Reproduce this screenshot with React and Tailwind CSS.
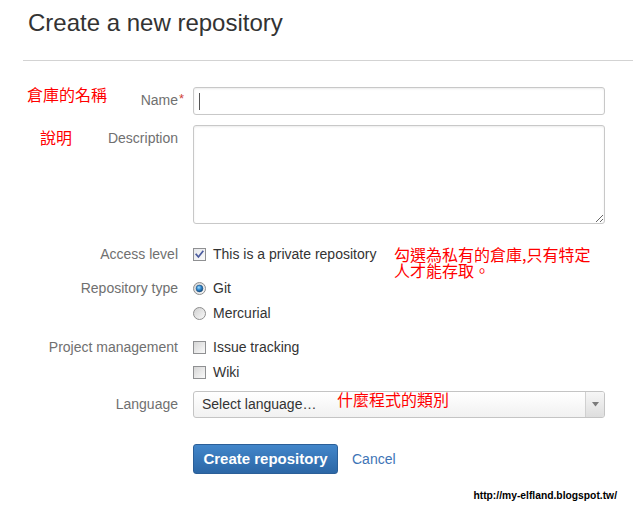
import React from "react";

function CheckBox({ checked }) {
  return (
    <svg width="13" height="13" viewBox="0 0 13 13" className="shrink-0">
      <defs>
        <linearGradient id={checked ? "cbg1" : "cbg0"} x1="0" y1="0" x2="1" y2="1">
          <stop offset="0" stopColor={checked ? "#e4e6ea" : "#d4d4d4"} />
          <stop offset="1" stopColor="#fbfbfb" />
        </linearGradient>
      </defs>
      <rect x="0.5" y="0.5" width="12" height="12" fill={`url(#${checked ? "cbg1" : "cbg0"})`} stroke="#8f9092" />
      {checked && (
        <path d="M3.2 6.4 L5.4 9 L9.8 3.4" stroke="#4b5b9e" strokeWidth="1.7" fill="none" strokeLinecap="square" />
      )}
    </svg>
  );
}

function Radio({ checked }) {
  return (
    <svg width="13" height="13" viewBox="0 0 13 13" className="shrink-0">
      <defs>
        <linearGradient id="rbg" x1="0" y1="0" x2="1" y2="1">
          <stop offset="0" stopColor="#cfcfcf" />
          <stop offset="1" stopColor="#fafafa" />
        </linearGradient>
        <radialGradient id="rdot" cx="0.4" cy="0.35" r="0.7">
          <stop offset="0" stopColor="#9fdcff" />
          <stop offset="0.5" stopColor="#2f86cc" />
          <stop offset="1" stopColor="#0e4475" />
        </radialGradient>
      </defs>
      <circle cx="6.5" cy="6.5" r="6" fill="url(#rbg)" stroke="#8e8e8e" />
      {checked && <circle cx="6.5" cy="6.5" r="3.4" fill="url(#rdot)" stroke="#1c4f80" strokeWidth="0.6" />}
    </svg>
  );
}

function Label({ children, className = "" }) {
  return (
    <div className={`w-[178px] shrink-0 text-right text-[14px] leading-[20px] text-[#707070] ${className}`}>
      {children}
    </div>
  );
}

function Option({ control, children }) {
  return (
    <div className="flex h-[20px] items-center gap-[7px] text-[14px] leading-[20px] text-[#333333]">
      {control}
      <span>{children}</span>
    </div>
  );
}

export default function App() {
  return (
    <div className="relative h-[517px] w-[633px] overflow-hidden bg-white font-['Liberation_Sans',Arial,sans-serif]">
      <h1 className="pl-[28px] pt-[9px] text-[24px] leading-[28px] text-[#333333]">Create a new repository</h1>
      <div className="ml-[23px] mt-[23px] h-px bg-[#d3d3d3]" />

      <div className="mt-[26px] flex flex-col">
        {/* Name */}
        <div className="flex">
          <Label className="mt-[3px]">
            <span className="relative">
              Name
              <span className="absolute left-full top-[-3px] pl-[1px] text-[13px] text-[#d04437]">*</span>
            </span>
          </Label>
          <div className="ml-[15px] flex h-[28px] w-[412px] items-center rounded-[3px] border border-[#c8c8c8] bg-white pl-[5px] shadow-[inset_0_1px_2px_rgba(0,0,0,0.08)]">
            <div className="h-[17px] w-px bg-[#555]" />
          </div>
        </div>

        {/* Description */}
        <div className="mt-[10px] flex">
          <Label className="mt-[3px]">Description</Label>
          <textarea
            readOnly
            className="ml-[15px] h-[99px] w-[412px] resize rounded-[3px] border border-[#c8c8c8] bg-white shadow-[inset_0_1px_2px_rgba(0,0,0,0.08)] outline-none"
          />
        </div>

        {/* Access level */}
        <div className="mt-[20px] flex">
          <Label>Access level</Label>
          <div className="ml-[15px]">
            <Option control={<CheckBox checked />}>This is a private repository</Option>
          </div>
        </div>

        {/* Repository type */}
        <div className="mt-[14px] flex">
          <Label>Repository type</Label>
          <div className="ml-[15px] flex flex-col gap-[5px]">
            <Option control={<Radio checked />}>Git</Option>
            <Option control={<Radio />}>Mercurial</Option>
          </div>
        </div>

        {/* Project management */}
        <div className="mt-[14px] flex">
          <Label>Project management</Label>
          <div className="ml-[15px] flex flex-col gap-[5px]">
            <Option control={<CheckBox />}>Issue tracking</Option>
            <Option control={<CheckBox />}>Wiki</Option>
          </div>
        </div>

        {/* Language */}
        <div className="mt-[9px] flex">
          <Label className="mt-[3px]">Language</Label>
          <div className="ml-[15px] flex h-[27px] w-[412px] items-stretch overflow-hidden rounded-[3px] border border-[#c4c4c4] bg-gradient-to-b from-white to-[#f1f1f1]">
            <div className="flex flex-1 items-center pl-[8px] text-[14px] text-[#333333]">Select language…</div>
            <div className="flex w-[19px] items-center justify-center border-l border-[#d0d0d0] bg-gradient-to-b from-[#f6f6f6] to-[#dedede]">
              <svg width="7" height="5" viewBox="0 0 7 5">
                <path d="M0 0 H7 L3.5 4.5 Z" fill="#7a7a7a" />
              </svg>
            </div>
          </div>
        </div>

        {/* Buttons */}
        <div className="mt-[26px] flex items-center pl-[193px]">
          <div className="flex h-[30px] w-[145px] items-center justify-center rounded-[3px] border border-[#2b5f98] bg-gradient-to-b from-[#4286ca] to-[#2c67a6] text-[15px] font-bold leading-[18px] text-white">
            Create repository
          </div>
          <span className="ml-[14px] text-[14px] leading-[20px] text-[#3e74b6]">Cancel</span>
        </div>

        <div className="mt-[16px] flex justify-end pr-[16px] text-[10.3px] font-bold leading-[12px] text-black">
          http://my-elfland.blogspot.tw/
        </div>
      </div>

      {/* Red annotations */}
      <div className="absolute left-[27px] top-[86px] font-['Noto_Sans_CJK_TC',sans-serif] text-[16px] leading-[16px] text-[#ff0000]">倉庫的名稱</div>
      <div className="absolute left-[40px] top-[129px] font-['Noto_Sans_CJK_TC',sans-serif] text-[16px] leading-[16px] text-[#ff0000]">說明</div>
      <div className="absolute left-[394px] top-[246px] flex flex-col font-['Noto_Sans_CJK_TC',sans-serif] text-[16px] leading-[16px] text-[#ff0000]">
        <span>勾選為私有的倉庫,只有特定</span>
        <span>人才能存取。</span>
      </div>
      <div className="absolute left-[337px] top-[391px] font-['Noto_Sans_CJK_TC',sans-serif] text-[16px] leading-[16px] text-[#ff0000]">什麼程式的類別</div>
    </div>
  );
}
